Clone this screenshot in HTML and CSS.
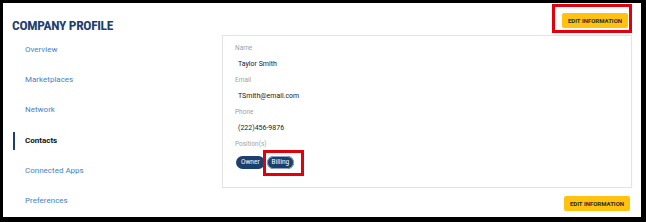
FILE: index.html
```html
<!DOCTYPE html>
<html lang="en">
<head>
    <meta charset="UTF-8">
    <title>Company Profile</title>
    <link rel="stylesheet" href="styles.css">
</head>
<body>
    <div class="page">
        <div class="header">
            <h1 class="title">COMPANY PROFILE</h1>
            <span class="callout callout-top">
                <button class="btn">EDIT INFORMATION</button>
            </span>
        </div>
        <div class="content">
            <ul class="nav">
                <li>Overview</li>
                <li>Marketplaces</li>
                <li>Network</li>
                <li class="active">Contacts</li>
                <li>Connected Apps</li>
                <li>Preferences</li>
            </ul>
            <div class="main">
                <div class="card">
                    <div class="field">
                        <div class="label">Name</div>
                        <div class="value">Taylor Smith</div>
                    </div>
                    <div class="field">
                        <div class="label">Email</div>
                        <div class="value">TSmith@email.com</div>
                    </div>
                    <div class="field">
                        <div class="label">Phone</div>
                        <div class="value">(222)456-9876</div>
                    </div>
                    <div class="field">
                        <div class="label">Position(s)</div>
                        <div class="chips">
                            <span class="chip">Owner</span>
                            <span class="chip chip-selected callout callout-chip">Billing</span>
                        </div>
                    </div>
                </div>
                <div class="footer">
                    <button class="btn">EDIT INFORMATION</button>
                </div>
            </div>
        </div>
    </div>
</body>
</html>
```

FILE: styles.css
```css
html, body {
    margin: 0;
    padding: 0;
}

body {
    background: #000;
    font-family: Roboto, "Liberation Sans", sans-serif;
    width: 646px;
    height: 222px;
    overflow: hidden;
}

.page {
    margin: 3px 0 0 3px;
    width: 638px;
    height: 214px;
    background: #fff;
}

/* header */
.header {
    display: flex;
    justify-content: space-between;
    align-items: flex-start;
    height: 32px;
    padding: 0 13px 0 9px;
}

.title {
    margin: 0;
    padding-top: 14px;
    font-size: 13.5px;
    line-height: 16px;
    font-weight: 700;
    font-stretch: condensed;
    letter-spacing: -0.3px;
    color: #1d3f6e;
}

.btn {
    display: block;
    height: 15px;
    padding: 0 6px;
    border: none;
    border-radius: 2px;
    background: #ffc20e;
    color: #2b2b2b;
    font-family: Roboto, "Liberation Sans", sans-serif;
    font-size: 6px;
    font-weight: 700;
}

.callout {
    position: relative;
}

.callout::after {
    content: "";
    position: absolute;
    border: 3px solid #e2000c;
}

.callout-top {
    margin-top: 10px;
}

.callout-top::after {
    top: -9px;
    left: -10px;
    right: -4px;
    bottom: -5px;
}

/* content */
.content {
    display: flex;
}

.nav {
    width: 219px;
    margin: 0;
    padding: 6px 0 0 0;
    list-style: none;
}

.nav li {
    height: 18px;
    line-height: 18px;
    margin: 0 0 12.2px 10px;
    padding-left: 10px;
    border-left: 2px solid transparent;
    font-size: 8px;
    color: #4283c9;
}

.nav li.active {
    border-left-color: #1d3f6e;
    color: #111;
    font-weight: 700;
}

.main {
    flex: 1;
    padding-right: 9px;
}

.card {
    border: 1px solid #e4e4e4;
    padding: 7px 12px 18px 12px;
    box-shadow: 0 0 1px rgba(0, 0, 0, 0.05);
}

.field + .field {
    margin-top: 6px;
}

.label {
    font-size: 6.5px;
    line-height: 10px;
    color: #a3a3a3;
}

.value {
    margin-top: 6px;
    padding-left: 3px;
    font-size: 7px;
    line-height: 10px;
    color: #222;
}

.chips {
    display: flex;
    gap: 2px;
    margin-top: 7px;
    padding-left: 1px;
}

.chip {
    height: 13px;
    line-height: 13px;
    padding: 0 5px;
    border-radius: 7px;
    background: #1d3f6e;
    color: #fff;
    font-size: 6.5px;
}

.chip-selected {
    box-shadow: inset 0 0 0 1px #8ea3c2;
}

.callout-chip::after {
    top: -6px;
    left: -4px;
    right: -10px;
    bottom: -7px;
}

.footer {
    display: flex;
    justify-content: flex-end;
    margin-top: 8px;
    padding-right: 2px;
}
```
